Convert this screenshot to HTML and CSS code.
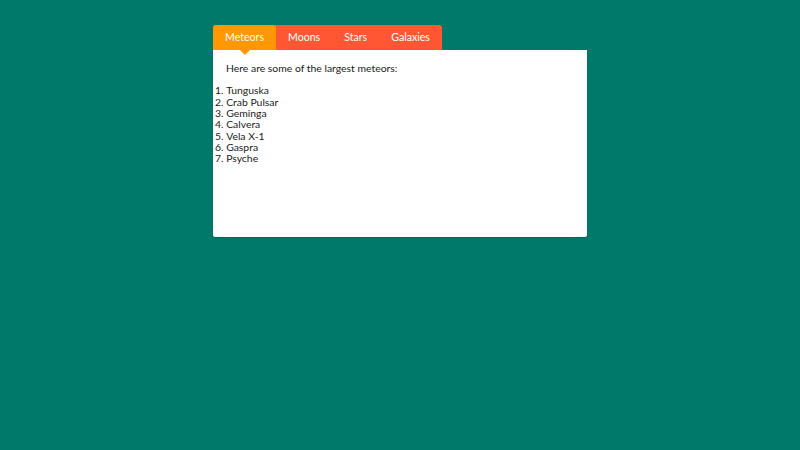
FILE: index.html
```html
<!DOCTYPE html>
<html>
<head>
<meta charset="utf-8">
<link rel="stylesheet" href="styles.css">
</head>
<body>
<div class="widget">
  <div class="tabs">
    <div class="tab active">Meteors</div>
    <div class="tab">Moons</div>
    <div class="tab">Stars</div>
    <div class="tab">Galaxies</div>
  </div>
  <div class="panel">
    <p class="intro">Here are some of the largest meteors:</p>
    <ol class="list">
      <li>Tunguska</li>
      <li>Crab Pulsar</li>
      <li>Geminga</li>
      <li>Calvera</li>
      <li>Vela X-1</li>
      <li>Gaspra</li>
      <li>Psyche</li>
    </ol>
  </div>
</div>
</body>
</html>
```
FILE: styles.css
```css
html, body {
  margin: 0;
  padding: 0;
  background: #00796b;
  height: 100%;
}
body {
  font-family: "Lato", "Open Sans", sans-serif;
  font-size: 10.4px;
}
.widget {
  width: 374px;
  margin-left: 213px;
  padding-top: 25px;
}
.tabs {
  display: flex;
  width: max-content;
  background: #ff5733;
  border-radius: 3px 3px 0 0;
}
.tab {
  position: relative;
  height: 25px;
  line-height: 25px;
  padding: 0 12px;
  color: #fff;
  font-size: 10.6px;
}
.tab.active {
  background: #ff9800;
  border-radius: 3px 3px 0 0;
}
.tab.active::after {
  content: "";
  position: absolute;
  left: 50%;
  bottom: -5px;
  margin-left: -5px;
  border-left: 5px solid transparent;
  border-right: 5px solid transparent;
  border-top: 5px solid #ff9800;
  z-index: 2;
}
.panel {
  background: #fff;
  height: 187px;
  box-sizing: border-box;
  border-radius: 0 0 2px 2px;
  box-shadow: 0 1px 1px rgba(0,0,0,0.15);
  padding: 13px 2px 0 2px;
  color: #1a1a1a;
  line-height: 11.33px;
}
.intro {
  margin: 0 0 11px 11px;
}
.list {
  margin: 0;
  padding: 0;
  list-style-position: inside;
}
```
